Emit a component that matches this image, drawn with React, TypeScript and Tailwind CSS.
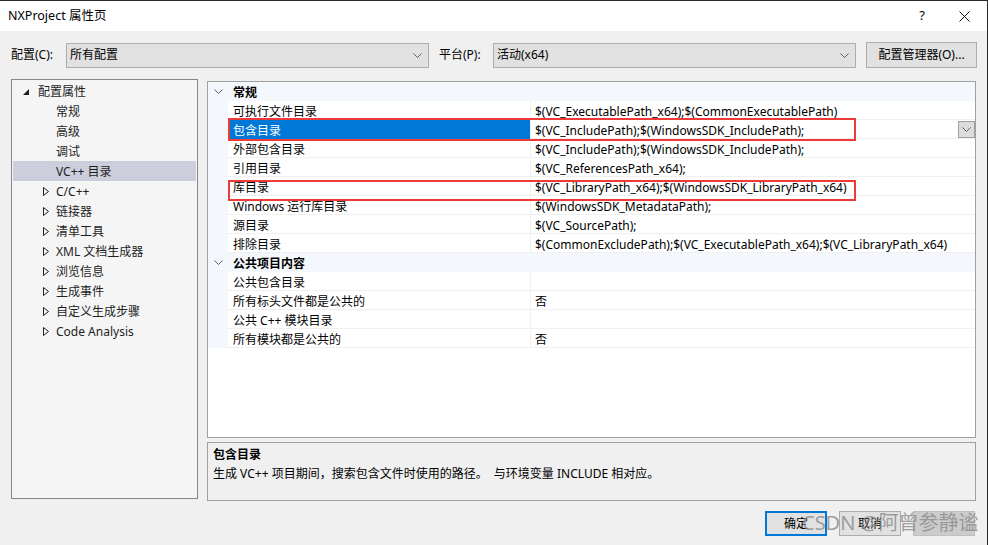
import React from "react";

const font = "font-['Noto_Sans','Noto_Sans_CJK_SC',sans-serif]";

function Chevron({ className = "" }: { className?: string }) {
  return (
    <svg width="9" height="5" viewBox="0 0 9 5" className={className}>
      <polyline points="0.5,0.5 4.5,4.5 8.5,0.5" fill="none" stroke="#606060" strokeWidth="1" />
    </svg>
  );
}

const treeChildren = ["C/C++", "链接器", "清单工具", "XML 文档生成器", "浏览信息", "生成事件", "自定义生成步骤", "Code Analysis"];

interface Row {
  name: string;
  value: string;
  selected?: boolean;
}

const general: Row[] = [
  { name: "可执行文件目录", value: "$(VC_ExecutablePath_x64);$(CommonExecutablePath)" },
  { name: "包含目录", value: "$(VC_IncludePath);$(WindowsSDK_IncludePath);", selected: true },
  { name: "外部包含目录", value: "$(VC_IncludePath);$(WindowsSDK_IncludePath);" },
  { name: "引用目录", value: "$(VC_ReferencesPath_x64);" },
  { name: "库目录", value: "$(VC_LibraryPath_x64);$(WindowsSDK_LibraryPath_x64)" },
  { name: "Windows 运行库目录", value: "$(WindowsSDK_MetadataPath);" },
  { name: "源目录", value: "$(VC_SourcePath);" },
  { name: "排除目录", value: "$(CommonExcludePath);$(VC_ExecutablePath_x64);$(VC_LibraryPath_x64)" },
];

const publicRows: Row[] = [
  { name: "公共包含目录", value: "" },
  { name: "所有标头文件都是公共的", value: "否" },
  { name: "公共 C++ 模块目录", value: "" },
  { name: "所有模块都是公共的", value: "否" },
];

function Category({ title }: { title: string }) {
  return (
    <div className="flex h-[19px] items-center bg-[#f4f7fb]">
      <div className="w-[20px] flex justify-center">
        <Chevron />
      </div>
      <span className="pl-[5px] pt-[2px] font-bold">{title}</span>
    </div>
  );
}

function PropRow({ row }: { row: Row }) {
  return (
    <div className="flex h-[19px]">
      <div className="w-[20px] bg-[#f4f7fb]" />
      <div
        className={
          row.selected
            ? "w-[302px] flex items-center pl-[5px] pt-[3px] bg-[#0078d7] text-white"
            : "w-[302px] flex items-center pl-[5px] pt-[3px] border-b border-[#f0f0f0]"
        }
      >
        {row.name}
      </div>
      <div className="flex-1 flex items-center pl-[4px] pt-[3px] border-l border-b border-[#f0f0f0] relative">
        <span className="whitespace-nowrap">{row.value}</span>
        {row.selected && (
          <div className="absolute right-0 top-[1px] w-[17px] h-[17px] bg-[#dcdcdc] border border-[#a0a0a0] flex items-center justify-center">
            <Chevron />
          </div>
        )}
      </div>
    </div>
  );
}

export default function App() {
  return (
    <div className={`${font} text-[12px] text-black w-[988px] h-[545px] bg-[#f0f0f0] relative overflow-hidden border-t border-r border-[#2a2a2a]`}>
      {/* title bar */}
      <div className="h-[30px] bg-white flex items-center pl-[8px]">
        <span className="text-[12.5px]">NXProject 属性页</span>
        <span className="ml-auto mr-[34px] text-[13px]">?</span>
        <svg width="11" height="11" viewBox="0 0 11 11" className="mr-[17px]">
          <path d="M0.5 0.5 L10.5 10.5 M10.5 0.5 L0.5 10.5" stroke="#111" strokeWidth="1" />
        </svg>
      </div>

      {/* toolbar */}
      <div className="flex items-center h-[26px] mt-[11px] pl-[11px]">
        <span className="w-[55px]">配置(C):</span>
        <div className="w-[363px] h-[25px] bg-[#e1e1e1] border border-[#adadad] flex items-center pl-[3px] pr-[6px]">
          <span>所有配置</span>
          <Chevron className="ml-auto" />
        </div>
        <span className="ml-[10px] w-[54px]">平台(P):</span>
        <div className="w-[363px] h-[25px] bg-[#e1e1e1] border border-[#adadad] flex items-center pl-[3px] pr-[6px]">
          <span>活动(x64)</span>
          <Chevron className="ml-auto" />
        </div>
        <button className="ml-[10px] w-[111px] h-[26px] bg-[#e1e1e1] border border-[#adadad] flex items-center justify-center">
          配置管理器(O)...
        </button>
      </div>

      {/* main */}
      <div className="flex mt-[11px] pl-[11px]">
        <div className="w-[187px] h-[420px] bg-[#f5f5f5] border border-[#828790] pt-[1px] px-[1px] text-[#1e1e1e]">
          <div className="h-[20px] flex items-center pt-[1px]">
            <svg width="6" height="6" viewBox="0 0 6 6" className="ml-[10px]">
              <polygon points="6,0 6,6 0,6" fill="#1e1e1e" />
            </svg>
            <span className="ml-[9px]">配置属性</span>
          </div>
          {["常规", "高级", "调试"].map((t) => (
            <div key={t} className="h-[20px] flex items-center pl-[43px] pt-[1px]">
              {t}
            </div>
          ))}
          <div className="h-[20px] flex items-center pl-[43px] pt-[1px] bg-[#cccedb]">VC++ 目录</div>
          {treeChildren.map((t) => (
            <div key={t} className="h-[20px] flex items-center pt-[1px]">
              <svg width="6" height="9" viewBox="0 0 6 9" className="ml-[30px]">
                <polygon points="0.5,0.5 5.5,4.5 0.5,8.5" fill="none" stroke="#1e1e1e" strokeWidth="1" />
              </svg>
              <span className="ml-[7px]">{t}</span>
            </div>
          ))}
        </div>

        <div className="ml-[9px] w-[769px] flex flex-col">
          <div className="mt-[2px] h-[357px] bg-white border border-[#a0a0a0] relative">
            <Category title="常规" />
            {general.map((r) => (
              <PropRow key={r.name} row={r} />
            ))}
            <Category title="公共项目内容" />
            {publicRows.map((r) => (
              <PropRow key={r.name} row={r} />
            ))}
            <div className="absolute left-[20px] top-[36px] w-[628px] h-[23px] border-2 border-[#ef3a3a]" />
            <div className="absolute left-[20px] top-[98px] w-[628px] h-[21px] border-2 border-[#ef3a3a]" />
          </div>
          <div className="mt-[4px] h-[59px] border border-[#a0a0a0] bg-[#f0f0f0] px-[5px] pt-[2px]">
            <div className="font-bold h-[19px] flex items-center">包含目录</div>
            <div className="h-[19px] flex items-center whitespace-pre">生成 VC++ 项目期间，搜索包含文件时使用的路径。  与环境变量 INCLUDE 相对应。</div>
          </div>
        </div>
      </div>

      {/* buttons */}
      <div className="flex justify-end gap-[12px] mt-[10px] pr-[12px]">
        <button className="w-[62px] h-[25px] bg-[#e1e1e1] border-2 border-[#0078d7]">确定</button>
        <button className="w-[62px] h-[25px] bg-[#e1e1e1] border border-[#adadad]">取消</button>
        <button className="w-[62px] h-[25px] bg-[#cccccc] border border-[#bfbfbf]" />
      </div>

      <div className="absolute left-[802px] top-[507px] text-[20px] text-[#8a8a8a]/80 whitespace-nowrap">
        CSDN @阿曾参静谧
      </div>
    </div>
  );
}
